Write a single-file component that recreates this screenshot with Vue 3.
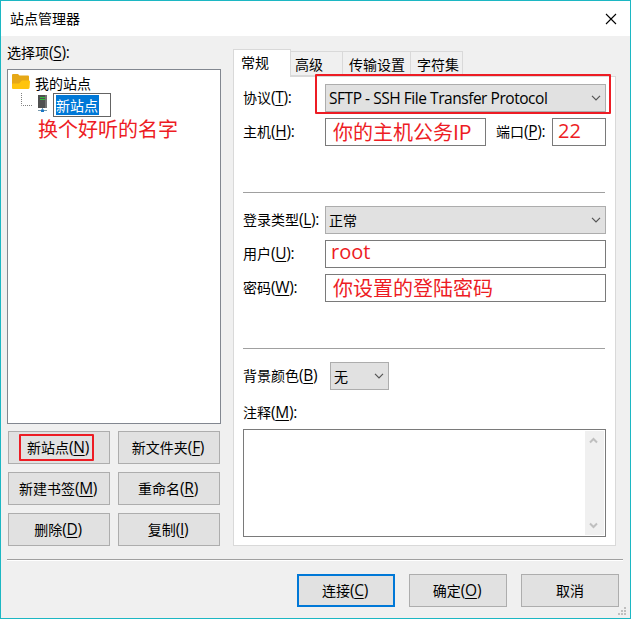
<script setup>
import { h } from 'vue'

const Caption = ({ text, k, tail = '' }) =>
  h('span', { class: 'caption' }, [
    text,
    k ? h('span', { class: 'latin' }, ['(', h('u', k), ')' + tail]) : null,
  ])
Caption.props = ['text', 'k', 'tail']

const Chevron = () =>
  h('svg', { class: 'chevron', viewBox: '0 0 10 6', width: 10, height: 6 }, [
    h('path', { d: 'M1 .8 5 4.8 9 .8', fill: 'none', stroke: '#555', 'stroke-width': 1.2 }),
  ])

const tabs = ['高级', '传输设置', '字符集']
const siteButtons = [
  { text: '新站点', k: 'N', marked: true },
  { text: '新文件夹', k: 'F' },
  { text: '新建书签', k: 'M' },
  { text: '重命名', k: 'R' },
  { text: '删除', k: 'D' },
  { text: '复制', k: 'I' },
]
const grip = [[6, 0], [3, 3], [6, 3], [0, 6], [3, 6], [6, 6]]
</script>

<template>
  <div class="window">
    <header class="titlebar">
      <span>站点管理器</span>
      <svg width="12" height="12" viewBox="0 0 12 12"><path d="M1 1 11 11M11 1 1 11" stroke="#000" stroke-width="1.1" /></svg>
    </header>

    <main class="body">
      <section class="left">
        <div class="select-label"><Caption text="选择项" k="S" tail=":" /></div>
        <div class="tree">
          <div class="root">
            <svg width="20" height="17" viewBox="0 0 20 17">
              <path d="M1 2Q1 1 2 1H7L8.500 2.500H17Q18 2.500 18 3.500V14H1Z" fill="#e6a817" />
              <path d="M1 11Q1 10.500 2 10.500H8L11 7.500H18Q19 7.500 19 8.500L18.500 15Q18.300 16 17 16H2Q1 16 1 15Z" fill="#ffc40d" />
            </svg>
            <span>我的站点</span>
          </div>
          <div class="child">
            <svg class="branch" width="12" height="14" viewBox="0 0 12 14"><path d="M.5 0V12.500H12" fill="none" stroke="#808080" stroke-dasharray="1 1" /></svg>
            <svg class="server" width="11" height="20" viewBox="0 0 11 20">
              <path d="M1 1H10V14H1Z" fill="#505050" />
              <path d="M8 1H10V14H8Z" fill="#747474" />
              <path d="M3 3.500H8M3 5.500H8" stroke="#2fbd3b" />
              <path d="M5.500 14V17M1 16.500H10" stroke="#7899ad" />
              <path d="M4 15.500H7V18H4Z" fill="#1976c5" />
            </svg>
            <div class="edit"><span>新站点</span></div>
          </div>
          <div class="note tree-note">换个好听的名字</div>
        </div>
        <div class="site-buttons">
          <button v-for="b in siteButtons" :key="b.text" class="btn" :class="{ marked: b.marked }">
            <Caption :text="b.text" :k="b.k" />
          </button>
        </div>
      </section>

      <section class="right">
        <nav class="tabs">
          <div class="tab active">常规</div>
          <div v-for="t in tabs" :key="t" class="tab">{{ t }}</div>
        </nav>
        <div class="panel">
          <div class="row protocol">
            <Caption text="协议" k="T" tail=":" />
            <div class="combo"><span class="latin proto">SFTP - SSH File Transfer Protocol</span><Chevron /></div>
          </div>
          <div class="row host">
            <Caption text="主机" k="H" tail=":" />
            <div class="input note">你的主机公务IP</div>
            <Caption text="端口" k="P" tail=":" />
            <div class="input note port">22</div>
          </div>
          <hr class="rule" />
          <div class="row">
            <Caption text="登录类型" k="L" tail=":" />
            <div class="combo"><span>正常</span><Chevron /></div>
          </div>
          <div class="row">
            <Caption text="用户" k="U" tail=":" />
            <div class="input note root-user">root</div>
          </div>
          <div class="row">
            <Caption text="密码" k="W" tail=":" />
            <div class="input note">你设置的登陆密码</div>
          </div>
          <hr class="rule" />
          <div class="row color">
            <Caption text="背景颜色" k="B" />
            <div class="combo"><span>无</span><Chevron /></div>
          </div>
          <div class="comment-label"><Caption text="注释" k="M" tail=":" /></div>
          <div class="comment">
            <div class="scroll">
              <svg width="9" height="7" viewBox="0 0 9 7"><path d="M1 5.500 4.500 2 8 5.500" fill="none" stroke="#bfbfbf" stroke-width="2" /></svg>
              <svg width="9" height="7" viewBox="0 0 9 7"><path d="M1 1.500 4.500 5 8 1.500" fill="none" stroke="#bfbfbf" stroke-width="2" /></svg>
            </div>
          </div>
        </div>
      </section>
    </main>

    <footer class="footer">
      <button class="btn default"><Caption text="连接" k="C" /></button>
      <button class="btn"><Caption text="确定" k="O" /></button>
      <button class="btn cancel"><Caption text="取消" /></button>
      <svg class="grip" width="8" height="8" viewBox="0 0 8 8"><rect v-for="(p, i) in grip" :key="i" :x="p[0]" :y="p[1]" width="2" height="2" fill="#bfbfbf" /></svg>
    </footer>
  </div>
</template>

<style>
body { margin: 0; }
.caption { display: inline-block; white-space: nowrap; padding-bottom: 2px; line-height: 20px; }
.latin { font-size: 15.5px; line-height: 1; font-family: "Open Sans", "Noto Sans", sans-serif; letter-spacing: -0.3px; }
.latin u { text-decoration: underline; text-decoration-thickness: 1px; text-underline-offset: 2px; text-decoration-skip-ink: none; }
.latin.proto { letter-spacing: -0.46px; line-height: 20px; }
</style>

<style scoped>
.window {
  box-sizing: border-box; width: 631px; height: 619px; overflow: hidden;
  border: 1px solid #1cb7c3; background: #f0f0f0; color: #000;
  font: 14px/20px "Noto Sans CJK SC", sans-serif;
}
.window *, .window *::after { box-sizing: border-box; }
.titlebar { height: 35px; background: #fff; display: flex; justify-content: space-between; align-items: center; padding: 0 13px 0 9px; }
.titlebar span { padding-bottom: 1px; }
.body { display: flex; gap: 12px; height: 523px; padding: 0 14px 0 6px; }
.left { width: 214px; }
.select-label { height: 33px; padding-top: 6px; }
.tree { height: 355px; border: 1px solid #828790; background: #fff; padding: 3px 0 0 3px; }
.root { display: flex; height: 20px; gap: 4px; align-items: flex-start; }
.child { display: flex; height: 24px; padding-left: 10px; }
.server { margin: 1px 0 0 4px; }
.edit { width: 58px; height: 24px; margin-left: 5px; border: 1px solid #646464; background: #fff; padding: 1px 2px; }
.edit span { display: block; width: 43px; height: 20px; background: #0078d7; color: #fff; line-height: 20px; }
.note { color: #ed1c24; font-size: 20px; line-height: 24px; white-space: nowrap; }
.tree-note { padding-left: 27px; }
.site-buttons { display: grid; grid-template-columns: 102px 102px; gap: 8px; padding: 7px 0 0 1px; }
.btn { position: relative; height: 33px; border: 1px solid #adadad; background: #e1e1e1; padding: 0 2px 0 0; font: inherit; color: inherit; }
.cancel { padding: 0; }
.marked::after { content: ""; position: absolute; left: 10px; top: 2px; width: 75px; height: 27px; border: 2px solid #ed1c24; border-radius: 1px; }
.right { width: 383px; padding-top: 13px; }
.tabs { display: flex; align-items: flex-end; height: 27px; }
.tab { height: 25px; padding: 2px 0 0 4px; border: 1px solid #d9d9d9; border-left: 0; width: 52px; white-space: nowrap; }
.tab:nth-child(3) { width: 68px; padding-left: 6px; }
.tab:nth-child(4) { padding-left: 6px; }
.tab.active { position: relative; top: 1px; width: 58px; height: 28px; border-left: 1px solid #d9d9d9; border-bottom: 0; background: #fff; padding: 2px 0 0 7px; }
.panel { height: 470px; border: 1px solid #d9d9d9; background: #fff; padding: 7px 9px 8px; }
.row { position: relative; display: grid; grid-template-columns: 82px 281px; height: 28px; align-items: center; margin-bottom: 6px; }
.protocol::after { content: ""; position: absolute; left: 72px; top: -10px; width: 296px; height: 40px; border: 2px solid #ed1c24; border-radius: 1px; }
.host { grid-template-columns: 82px 161px 66px 54px; }
.host .caption:nth-child(3) { padding-left: 10px; }
.combo { height: 28px; display: flex; justify-content: space-between; align-items: center; border: 1px solid #adadad; background: #e1e1e1; padding: 0 4px 0 3px; white-space: nowrap; }
.input { height: 28px; border: 1px solid #7a7a7a; background: #fff; padding: 1px 0 0 7px; }
.port { padding: 0 0 0 5px; font-family: "Open Sans", sans-serif; }
.root-user { padding: 0 0 0 5px; line-height: 22px; font-family: "Open Sans", sans-serif; }
.rule { height: 1px; width: 362px; border: 0; background: #a0a0a0; margin: 46px 0 13px; }
.color { grid-template-columns: 87px 59px; }
.comment-label { height: 33px; padding-top: 6px; }
.comment { display: flex; justify-content: flex-end; width: 363px; height: 108px; border: 1px solid #7a7a7a; padding: 1px; background: #fff; }
.scroll { width: 19px; height: 104px; background: #f0f0f0; display: flex; flex-direction: column; justify-content: space-between; align-items: center; padding: 6px 2px 6px 0; }
.footer { position: relative; height: 58px; margin: 0 7px 0 6px; border-top: 1px solid #a0a0a0; box-shadow: inset 0 1px #fff; display: flex; gap: 14px; padding: 14px 0 0 290px; }
.footer .btn { flex: 0 0 98px; }
.footer .default { border: 2px solid #0078d7; }
.grip { position: absolute; right: -3px; bottom: 2px; }
</style>
